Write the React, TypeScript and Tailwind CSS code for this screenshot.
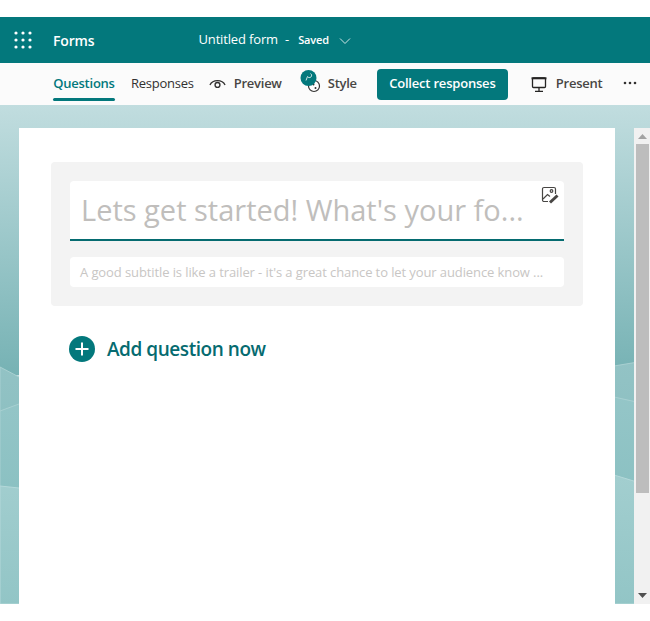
export default function App() {
  const dots = [3, 10, 17];
  return (
    <div className="w-[650px] h-[621px] bg-white flex flex-col overflow-hidden font-['Open_Sans','Noto_Sans',sans-serif]">
      <div className="h-[17px] bg-white" />
      <header className="h-[46px] bg-[#03787c] flex items-center text-white">
        <svg width="20" height="20" viewBox="0 0 20 20" className="ml-[13px]" fill="white">
          {dots.map((y) => dots.map((x) => <circle key={`${x}-${y}`} cx={x} cy={y} r="1.6" />))}
        </svg>
        <span className="ml-[20px] text-[14px] font-semibold tracking-[-0.15px]">Forms</span>
        <span className="ml-[104px] text-[13px] tracking-[-0.15px]">Untitled form</span>
        <span className="ml-[7px] text-[13px]">-</span>
        <span className="ml-[9px] text-[11px] font-semibold tracking-[-0.15px]">Saved</span>
        <svg width="12" height="8" viewBox="0 0 12 8" className="ml-[10px] mt-[2px]" fill="none" stroke="#cfe6e6" strokeWidth="1">
          <path d="M1 1.5 L6 6.5 L11 1.5" />
        </svg>
      </header>
      <nav className="h-[42px] bg-[#fbfbfb] flex items-center text-[13px] text-[#323130] tracking-[-0.25px]">
        <div className="ml-[53px] w-[62px] h-full relative flex items-center justify-center font-semibold text-[#03787c]">
          Questions
          <div className="absolute left-0 right-0 bottom-[4px] h-[3px] rounded-sm bg-[#03787c]" />
        </div>
        <span className="ml-[16px]">Responses</span>
        <svg width="17" height="12" viewBox="0 0 18 12" className="ml-[15px]" fill="none" stroke="#323130" strokeWidth="1.4">
          <path d="M1 7 C4 1 14 1 17 7" />
          <circle cx="9" cy="7" r="2.6" />
        </svg>
        <span className="ml-[8px] font-semibold text-[#484644]">Preview</span>
        <svg width="22" height="26" viewBox="0 0 22 26" className="ml-[18px] mb-[5px]">
          <circle cx="14" cy="17" r="5.5" fill="white" stroke="#323130" strokeWidth="1.2" />
          <circle cx="13.5" cy="15.5" r="1" fill="#323130" />
          <circle cx="15.5" cy="19" r="1" fill="#323130" />
          <circle cx="8.5" cy="9" r="8" fill="#03787c" />
          <path d="M10.5 4.5 a2.2 2.2 0 1 1 -3 3 L6 11.5" fill="none" stroke="#cfe6e6" strokeWidth="1" />
        </svg>
        <span className="ml-[6px] font-semibold text-[#484644]">Style</span>
        <button className="ml-[20px] w-[131px] h-[31px] rounded-[4px] bg-[#03787c] text-white font-semibold tracking-[-0.2px]">Collect responses</button>
        <svg width="16" height="17" viewBox="0 0 16 17" className="ml-[23px]" fill="none" stroke="#252423" strokeWidth="1.3">
          <rect x="1.5" y="2" width="13" height="9.5" rx="1" />
          <path d="M0.5 2.3 H15.5" strokeWidth="2" />
          <path d="M8 11.5 V15 M4 15.3 H12" />
        </svg>
        <span className="ml-[9px] font-semibold text-[#484644]">Present</span>
        <svg width="14" height="4" viewBox="0 0 14 4" className="ml-[21px] mb-[3px]" fill="#323130">
          <circle cx="2" cy="2" r="1.3" />
          <circle cx="7" cy="2" r="1.3" />
          <circle cx="12" cy="2" r="1.3" />
        </svg>
      </nav>
      <main className="relative h-[499px] pt-[23px] flex items-stretch overflow-hidden bg-[#c1dddf]">
        <svg width="650" height="499" viewBox="0 0 650 499" className="absolute left-0 top-0">
          <defs>
            <linearGradient id="g0" x1="0" y1="0" x2="0" y2="1">
              <stop offset="0" stopColor="#c1dddf" />
              <stop offset="1" stopColor="#76b2b4" />
            </linearGradient>
            <linearGradient id="g1" x1="0" y1="0" x2="0" y2="1">
              <stop offset="0" stopColor="#93c3c5" />
              <stop offset="1" stopColor="#7cb7b8" />
            </linearGradient>
            <linearGradient id="g2" x1="0" y1="0" x2="0" y2="1">
              <stop offset="0" stopColor="#97c7c9" />
              <stop offset="1" stopColor="#80bbbc" />
            </linearGradient>
            <linearGradient id="g3" x1="0" y1="0" x2="0" y2="1">
              <stop offset="0" stopColor="#a4cfd0" />
              <stop offset="1" stopColor="#92c5c6" />
            </linearGradient>
          </defs>
          <rect x="0" y="0" width="650" height="270" fill="url(#g0)" />
          <path d="M0 262 L19 272 C200 340 450 300 614 261 L650 255 V499 H0 Z" fill="url(#g1)" stroke="#a8d0d1" strokeWidth="1" />
          <path d="M0 306 L19 299 C200 260 450 250 614 292 L650 300 V499 H0 Z" fill="url(#g2)" stroke="#a8d0d1" strokeWidth="1" />
          <path d="M0 381 L19 383 C200 400 450 330 614 370 L650 381 V499 H0 Z" fill="url(#g3)" stroke="#b4d8d9" strokeWidth="1" />
        </svg>
        <section className="relative ml-[19px] w-[596px] bg-white pt-[34px] pl-[32px]">
          <div className="w-[532px] h-[144px] rounded-[4px] bg-[#f3f3f3] pt-[19px] px-[19px]">
            <div className="relative h-[60px] bg-white rounded-t-[4px] border-b-2 border-[#056b70] pl-[11px] pr-[40px] flex items-center">
              <span className="text-[29px] text-[#c0bebc] whitespace-nowrap">Lets get started! What's your fo...</span>
              <svg width="18" height="18" viewBox="0 0 18 18" className="absolute right-[5px] top-[5px]" fill="none" stroke="#484644" strokeWidth="1.2">
                <path d="M7 15.5 H3 a1.5 1.5 0 0 1 -1.5 -1.5 V3 A1.5 1.5 0 0 1 3 1.5 H13 A1.5 1.5 0 0 1 14.5 3 V8" />
                <path d="M2 13 L6.5 8.5 L9 10.5" />
                <circle cx="10.5" cy="5" r="1.3" />
                <path d="M9 16.5 L16.5 9.5" stroke="#484644" strokeWidth="3" />
              </svg>
            </div>
            <div className="mt-[16px] h-[30px] bg-white rounded-[4px] pl-[10px] pt-[2px] flex items-center text-[13px] text-[#c8c6c4] whitespace-nowrap tracking-[-0.1px]">
              A good subtitle is like a trailer - it's a great chance to let your audience know ...
            </div>
          </div>
          <div className="mt-[29px] ml-[18px] flex items-center">
            <span className="w-[26px] h-[26px] rounded-full bg-[#03787c] flex items-center justify-center">
              <svg width="14" height="14" viewBox="0 0 14 14" stroke="white" strokeWidth="2">
                <path d="M7 0.5 V13.5 M0.5 7 H13.5" />
              </svg>
            </span>
            <span className="ml-[12px] text-[19px] font-semibold text-[#056b70] tracking-[-0.45px]">Add question now</span>
          </div>
        </section>
        <aside className="relative ml-[19px] w-[16px] bg-[#f1f1f1] flex flex-col items-center">
          <svg width="9" height="5" viewBox="0 0 9 5" className="mt-[6px]" fill="#a3a3a3">
            <path d="M4.5 0 L9 5 H0 Z" />
          </svg>
          <div className="mt-[5px] w-[13px] h-[349px] bg-[#bdbdbd]" />
          <svg width="9" height="5" viewBox="0 0 9 5" className="mt-auto mb-[6px]" fill="#505050">
            <path d="M0 0 H9 L4.5 5 Z" />
          </svg>
        </aside>
      </main>
    </div>
  );
}
